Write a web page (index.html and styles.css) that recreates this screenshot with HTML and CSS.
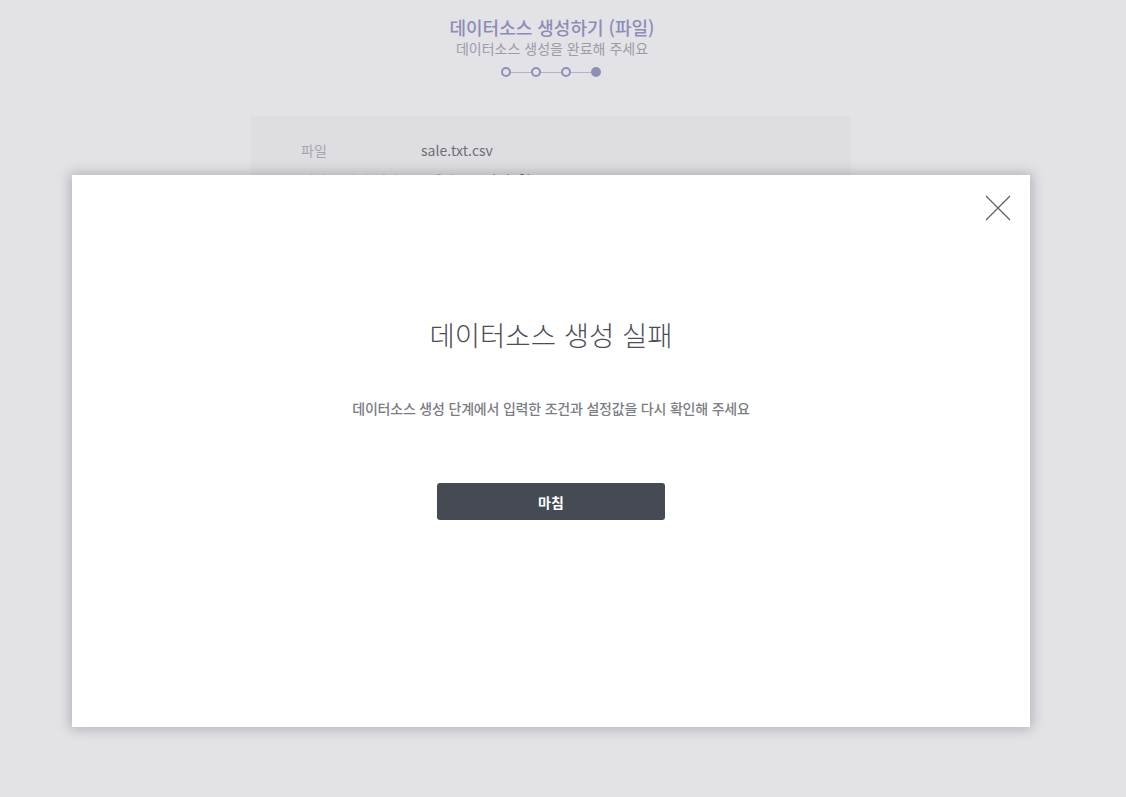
FILE: index.html
```html
<!DOCTYPE html>
<html lang="ko">
  <head>
    <meta charset="utf-8">
    <title>데이터소스 생성하기 (파일)</title>
    <link rel="stylesheet" href="styles.css">
  </head>
  <body>
    <div class="page">
      <div class="header">
        <h1>데이터소스 생성하기 (파일)</h1>
        <p class="sub">데이터소스 생성을 완료해 주세요</p>
        <div class="steps">
          <span class="dot"></span><span class="line"></span>
          <span class="dot"></span><span class="line"></span>
          <span class="dot"></span><span class="line"></span>
          <span class="dot on"></span>
        </div>
      </div>
      <div class="panel">
        <div class="row"><span class="key">파일</span><span class="val">sale.txt.csv</span></div>
        <div class="row"><span class="key">파일 스키마 설정</span><span class="val">; 세미콜론 단위, 열</span></div>
      </div>
    </div>

    <div class="modal">
      <button class="close" aria-label="닫기">
        <svg width="26" height="26" viewBox="0 0 26 26">
          <path d="M1 1 L25 25 M25 1 L1 25" stroke="#5b606a" stroke-width="1.2" fill="none"/>
        </svg>
      </button>
      <h2>데이터소스 생성 실패</h2>
      <p class="msg">데이터소스 생성 단계에서 입력한 조건과 설정값을 다시 확인해 주세요</p>
      <button class="done">마침</button>
    </div>
  </body>
</html>
```

FILE: styles.css
```css
body {
  margin: 0;
  background-color: #e3e2e7;
  font-family: "Noto Sans CJK KR", "Noto Sans", sans-serif;
  height: 797px;
  overflow: hidden;
}

.page {
  width: 1102px;
  display: flex;
  flex-direction: column;
  align-items: center;
}

.header {
  display: flex;
  flex-direction: column;
  align-items: center;
  padding-top: 14px;
  margin-left: 2px;
}

h1 {
  margin: 0;
  font-size: 18px;
  font-weight: 500;
  color: #8c8db6;
  line-height: 26px;
}

.sub {
  margin: 0;
  font-size: 14px;
  color: #9d9ca6;
  line-height: 16px;
}

.steps {
  display: flex;
  align-items: center;
  margin-top: 11px;
  margin-right: 2px;
}

.dot {
  width: 6px;
  height: 6px;
  border: 2px solid #8e8fb8;
  border-radius: 50%;
  box-sizing: content-box;
}

.dot.on {
  background-color: #8e8fb8;
}

.line {
  width: 20px;
  height: 1px;
  background-color: #b3b3cb;
}

.panel {
  margin-top: 39px;
  width: 600px;
  background-color: #dedde2;
  padding: 25px 0 0 50px;
  box-sizing: border-box;
  height: 120px;
}

.row {
  display: flex;
  font-size: 14px;
  line-height: 18px;
  margin-bottom: 12px;
}

.key {
  width: 120px;
  color: #a6a5ad;
}

.val {
  color: #6e6e76;
}

.modal {
  position: absolute;
  left: 72px;
  top: 175px;
  width: 958px;
  height: 552px;
  background-color: #fff;
  box-shadow: 0 0 12px 2px rgba(0, 0, 0, 0.22);
  display: flex;
  flex-direction: column;
  align-items: center;
}

.close {
  position: absolute;
  top: 20px;
  right: 19px;
  padding: 0;
  border: none;
  background: none;
  width: 26px;
  height: 26px;
}

h2 {
  margin: 139px 0 0;
  font-size: 27.5px;
  font-weight: 300;
  color: #4b4e55;
  line-height: 40px;
}

.msg {
  margin: 44px 0 0;
  font-size: 14px;
  font-weight: 500;
  color: #7b7d85;
  line-height: 20px;
  letter-spacing: -0.2px;
}

.done {
  margin-top: 65px;
  width: 228px;
  height: 37px;
  border: none;
  border-radius: 3px;
  background-color: #464a53;
  color: #fff;
  font-family: inherit;
  font-size: 14px;
  font-weight: 700;
}
```
